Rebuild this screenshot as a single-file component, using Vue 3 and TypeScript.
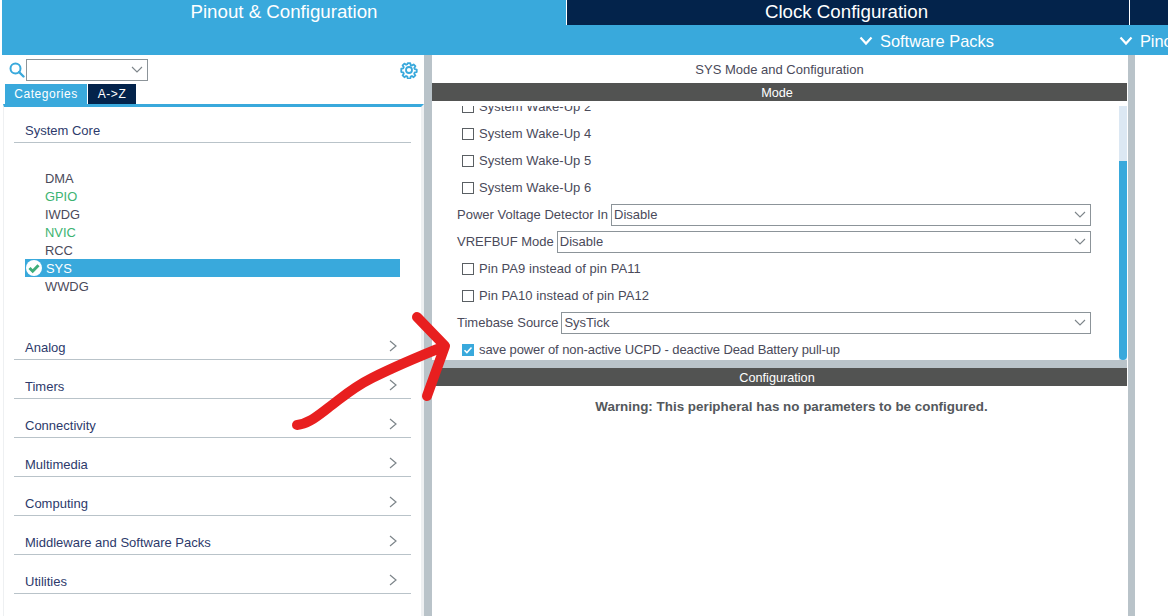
<script setup lang="ts">
const collapsed: string[] = ['Analog', 'Timers', 'Connectivity', 'Multimedia', 'Computing', 'Middleware and Software Packs', 'Utilities']
const peripherals = [
  { name: 'DMA', cls: '' },
  { name: 'GPIO', cls: 'ok' },
  { name: 'IWDG', cls: '' },
  { name: 'NVIC', cls: 'ok' },
  { name: 'RCC', cls: '' },
  { name: 'SYS', cls: 'sel' },
  { name: 'WWDG', cls: '' },
]
type Row = { kind: 'check' | 'select'; label: string; value?: string; checked?: boolean }
const rows: Row[] = [
  { kind: 'check', label: 'System Wake-Up 2' },
  { kind: 'check', label: 'System Wake-Up 4' },
  { kind: 'check', label: 'System Wake-Up 5' },
  { kind: 'check', label: 'System Wake-Up 6' },
  { kind: 'select', label: 'Power Voltage Detector In', value: 'Disable' },
  { kind: 'select', label: 'VREFBUF Mode', value: 'Disable' },
  { kind: 'check', label: 'Pin PA9 instead of pin PA11' },
  { kind: 'check', label: 'Pin PA10 instead of pin PA12' },
  { kind: 'select', label: 'Timebase Source', value: 'SysTick' },
  { kind: 'check', label: 'save power of non-active UCPD - deactive Dead Battery pull-up', checked: true },
]
</script>

<template>
  <div class="app">
    <header class="head">
      <div class="tabs">
        <div class="tab active">Pinout &amp; Configuration</div>
        <div class="tab dark">Clock Configuration</div>
        <div class="tab dark rest"></div>
      </div>
      <div class="sub">
        <div class="sub-item first">
          <svg width="14" height="10" viewBox="0 0 14 10"><path d="M1.5 1.5 7 7.5l5.5-6" fill="none" stroke="#fff" stroke-width="2.2" /></svg>
          <span>Software Packs</span>
        </div>
        <div class="sub-item second">
          <svg width="14" height="10" viewBox="0 0 14 10"><path d="M1.5 1.5 7 7.5l5.5-6" fill="none" stroke="#fff" stroke-width="2.2" /></svg>
          <span>Pinout</span>
        </div>
      </div>
    </header>

    <main class="body">
      <aside class="left">
        <div class="tools">
          <svg class="search" width="16" height="16" viewBox="0 0 16 16"><circle cx="6.5" cy="6.5" r="5" fill="none" stroke="#39a9dc" stroke-width="2" /><path d="M10 10l4.5 4.5" stroke="#39a9dc" stroke-width="2.4" stroke-linecap="round" /></svg>
          <div class="combo">
            <svg width="12" height="7" viewBox="0 0 12 7"><path d="M1 1l5 5 5-5" fill="none" stroke="#7d858a" stroke-width="1.1" /></svg>
          </div>
          <svg class="gear" width="18" height="18" viewBox="0 0 18 18">
            <circle cx="9" cy="9" r="3" fill="none" stroke="#39a9dc" stroke-width="1.8" />
            <path d="M7.6 1.3h2.8l.4 2.2 1.4.6 1.9-1.3 2 2-1.3 1.9.6 1.4 2.2.4v2.8l-2.2.4-.6 1.4 1.3 1.9-2 2-1.9-1.3-1.4.6-.4 2.2H7.6l-.4-2.2-1.4-.6-1.9 1.3-2-2 1.3-1.9-.6-1.4-2.2-.4V7.6l2.2-.4.6-1.4-1.3-1.9 2-2 1.9 1.3 1.4-.6z" transform="translate(.9 .9) scale(.9)" fill="none" stroke="#39a9dc" stroke-width="2" stroke-linejoin="round" />
          </svg>
        </div>
        <div class="cat-tabs">
          <div class="cat-tab on">Categories</div>
          <div class="cat-tab off">A-&gt;Z</div>
        </div>
        <div class="tree">
          <div class="group open">System Core</div>
          <ul class="items">
            <li v-for="p in peripherals" :key="p.name" :class="p.cls">
              <svg v-if="p.cls === 'sel'" class="tick" width="18" height="18" viewBox="0 0 18 18">
                <circle cx="9" cy="9" r="8" fill="#fff" />
                <path d="M4.5 9l3.2 3.2 5.8-6" fill="none" stroke="#3fae7a" stroke-width="3" />
              </svg>
              {{ p.name }}
            </li>
          </ul>
          <div v-for="c in collapsed" :key="c" class="group closed">
            <span>{{ c }}</span>
            <svg width="8" height="12" viewBox="0 0 8 12"><path d="M1 1l6 5-6 5" fill="none" stroke="#7d858a" stroke-width="1.2" /></svg>
          </div>
        </div>
      </aside>

      <section class="right">
        <div class="title">SYS Mode and Configuration</div>
        <div class="bar">Mode</div>
        <div class="scroll">
          <div class="viewport">
            <div class="rows">
              <div v-for="r in rows" :key="r.label" class="row" :class="[r.kind, { tight: r.checked }]">
                <template v-if="r.kind === 'check'">
                  <span class="box" :class="{ on: r.checked }">
                    <svg v-if="r.checked" width="10" height="10" viewBox="0 0 10 10"><path d="M1.5 5.2l2.4 2.4 4.6-5" fill="none" stroke="#fff" stroke-width="1.5" /></svg>
                  </span>
                  <span>{{ r.label }}</span>
                </template>
                <template v-else>
                  <span>{{ r.label }}</span>
                  <div class="sel-box">
                    <span>{{ r.value }}</span>
                    <svg width="12" height="7" viewBox="0 0 12 7"><path d="M1 1l5 5 5-5" fill="none" stroke="#7d858a" stroke-width="1.1" /></svg>
                  </div>
                </template>
              </div>
            </div>
          </div>
          <div class="track"><div class="thumb"></div></div>
        </div>
        <div class="band"></div>
        <div class="bar">Configuration</div>
        <div class="warn">Warning: This peripheral has no parameters to be configured.</div>
      </section>
      <div class="edge"></div>
    </main>

    <svg class="arrow" width="1168" height="616" viewBox="0 0 1168 616">
      <path d="M297 425C308 424 316 417 328 408C344 396 352 388 372 378C392 368 420 356 445 346M417 317L445 346L427 396" fill="none" stroke="#e81f1f" stroke-width="10" stroke-linecap="round" stroke-linejoin="round" />
    </svg>
  </div>
</template>

<style>
html, body { margin: 0; overflow: hidden; background: #fff; }
</style>

<style scoped>
.app {
  position: relative;
  width: 1168px;
  height: 616px;
  overflow: hidden;
  display: flex;
  flex-direction: column;
  font-family: "Liberation Sans", Arial, sans-serif;
  background: #fff;
}
.head { margin-left: 2px; flex: none; }
.tabs { display: flex; height: 25px; }
.tab {
  display: flex;
  align-items: center;
  justify-content: center;
  font-size: 18.7px;
  color: #fff;
  padding-bottom: 2px;
  box-sizing: border-box;
}
.tab.active { width: 564px; background: #39a9dc; }
.tab.dark { background: #03234b; }
.tab:nth-child(2) { width: 562px; margin-left: 1px; padding-right: 3px; }
.tab.rest { flex: 1; margin-left: 1px; }
.sub {
  height: 30px;
  background: #39a9dc;
  display: flex;
  color: #fff;
  font-size: 16.4px;
}
.sub-item { display: flex; align-items: center; gap: 7px; white-space: nowrap; padding-top: 2px; box-sizing: border-box; }
.sub-item.first { margin-left: 857px; }
.sub-item.second { margin-left: 125px; }

.body { flex: 1; display: flex; min-height: 0; }
.left {
  width: 430px;
  margin-left: 2px;
  flex: none;
  display: flex;
  flex-direction: column;
  box-sizing: border-box;
  border-right: 8px solid #b9c3c9;
}
.tools { display: flex; align-items: center; height: 29px; padding-left: 7px; box-sizing: border-box; }
.search { margin-right: 1px; }
.combo {
  width: 122px;
  height: 22px;
  box-sizing: border-box;
  border: 1px solid #8c9499;
  display: flex;
  align-items: center;
  justify-content: flex-end;
  padding-right: 4px;
}
.gear { margin-left: auto; margin-right: 6px; }
.cat-tabs { display: flex; height: 20px; padding-left: 3px; gap: 1px; }
.cat-tab {
  display: flex;
  align-items: center;
  justify-content: center;
  color: #fff;
  font-size: 12px;
  letter-spacing: 0.55px;
}
.cat-tab.on { width: 82px; background: #39a9dc; }
.cat-tab.off { width: 48px; background: #03234b; }
.tree {
  flex: 1;
  margin-left: 1px;
  border-top: 3px solid #39a9dc;
  border-left: 1px solid #eef0f2;
  border-right: 3px solid #eef0f2;
  box-sizing: border-box;
  padding: 0 10px;
  min-height: 0;
}
.group {
  height: 39px;
  box-sizing: border-box;
  border-bottom: 1px solid #b9c3c9;
  display: flex;
  align-items: flex-end;
  justify-content: space-between;
  padding: 0 14px 4px 11px;
  font-size: 13px;
  color: #2d3a6b;
}
.group svg { margin-bottom: 3px; }
.group.open { height: 36px; padding-bottom: 4px; }
.items {
  list-style: none;
  margin: 0;
  padding: 26px 0 0 11px;
  height: 178px;
  box-sizing: border-box;
  font-size: 12.9px;
  color: #4a4a5a;
}
.items li { height: 18px; line-height: 18px; padding: 1px 0 0 20px; box-sizing: border-box; width: 375px; position: relative; }
.items li.ok { color: #3cb371; }
.items li.sel { background: #39a9dc; color: #fff; padding-left: 21px; }
.tick { position: absolute; left: 0; top: 0; }

.right {
  width: 695px;
  flex: none;
  display: flex;
  flex-direction: column;
  align-items: stretch;
  color: #4a4a5a;
  font-size: 13px;
}
.title { height: 28px; display: flex; align-items: center; justify-content: center; text-align: center; padding-top: 1px; box-sizing: border-box; }
.bar {
  height: 18px;
  flex: none;
  background: #525352;
  color: #fff;
  font-size: 12.7px;
  display: flex;
  align-items: center;
  justify-content: center;
  padding: 1px 5px 0 0;
  box-sizing: border-box;
}
.scroll { display: flex; height: 259px; padding-top: 5px; box-sizing: border-box; flex: none; }
.viewport { flex: 1; min-width: 0; overflow: hidden; }
.rows { margin-top: -13px; padding: 0 28px 0 25px; }
.row { height: 27px; display: flex; align-items: center; white-space: nowrap; }
.row.check { padding-left: 5px; gap: 5px; letter-spacing: 0.05px; }
.row.tight { letter-spacing: -0.1px; }
.box {
  width: 12px;
  height: 12px;
  box-sizing: border-box;
  border: 1px solid #5a5f63;
  display: flex;
  align-items: center;
  justify-content: center;
  flex: none;
}
.box.on { background: #39a9dc; border-color: #39a9dc; }
.sel-box {
  flex: 1;
  height: 22px;
  margin-left: 3px;
  box-sizing: border-box;
  border: 1px solid #8c9499;
  display: flex;
  align-items: center;
  justify-content: space-between;
  padding: 0 4px 0 2px;
}
.track { width: 8px; background: #dce8f3; flex: none; }
.thumb { height: 199px; margin-top: 55px; background: #39a9dc; border-radius: 0 0 4px 4px; }
.band { height: 8px; background: #b9c3c9; flex: none; }
.warn { text-align: center; font-weight: 700; font-size: 13.4px; padding: 13px 0 0 24px; color: #54585c; }
.edge { width: 7px; margin-left: 1px; background: #b9c3c9; flex: none; }
.arrow { position: absolute; left: 0; top: 0; pointer-events: none; }
</style>
